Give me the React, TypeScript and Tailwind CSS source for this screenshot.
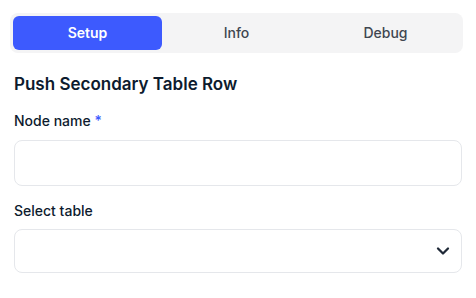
import { ChevronDown } from "lucide-react";

const tabs = ["Setup", "Info", "Debug"];

export default function App() {
  return (
    <div
      className="min-h-screen bg-white pl-[10px] pt-[13px]"
      style={{ fontFamily: "Inter, 'Noto Sans', sans-serif" }}
    >
      {/* Tabs */}
      <div className="flex h-[40px] w-[453px] rounded-lg bg-[#f4f4f5] p-[3px]">
        {tabs.map((t, i) => (
          <button
            key={t}
            type="button"
            className={
              i === 0
                ? "flex-1 rounded-md bg-[#3d5afe] text-sm font-semibold text-white"
                : "flex-1 rounded-md text-sm font-medium text-[#3f4650]"
            }
          >
            {t}
          </button>
        ))}
      </div>

      <div className="ml-1 w-[448px]">
        <h2 className="mt-[19px] text-[17px] leading-6 font-semibold text-[#0d1b2e]">
          Push Secondary Table Row
        </h2>

        {/* Node name */}
        <label className="mt-[15px] block text-sm leading-5 font-medium text-[#0d1b2e]">
          Node name <span className="text-[#3d5afe]">*</span>
        </label>
        <input
          type="text"
          className="mt-[9px] block h-[46px] w-full rounded-lg border border-[#e5e7eb] bg-white px-3 text-sm outline-none"
        />

        {/* Select table */}
        <label className="mt-[15px] block text-sm leading-5 font-medium text-[#0d1b2e]">
          Select table
        </label>
        <div className="mt-2 flex h-[44px] w-full items-center justify-end rounded-lg border border-[#e5e7eb] bg-white pr-[8px]">
          <ChevronDown className="h-5 w-5 text-[#1f2937]" strokeWidth={2.75} />
        </div>
      </div>
    </div>
  );
}
